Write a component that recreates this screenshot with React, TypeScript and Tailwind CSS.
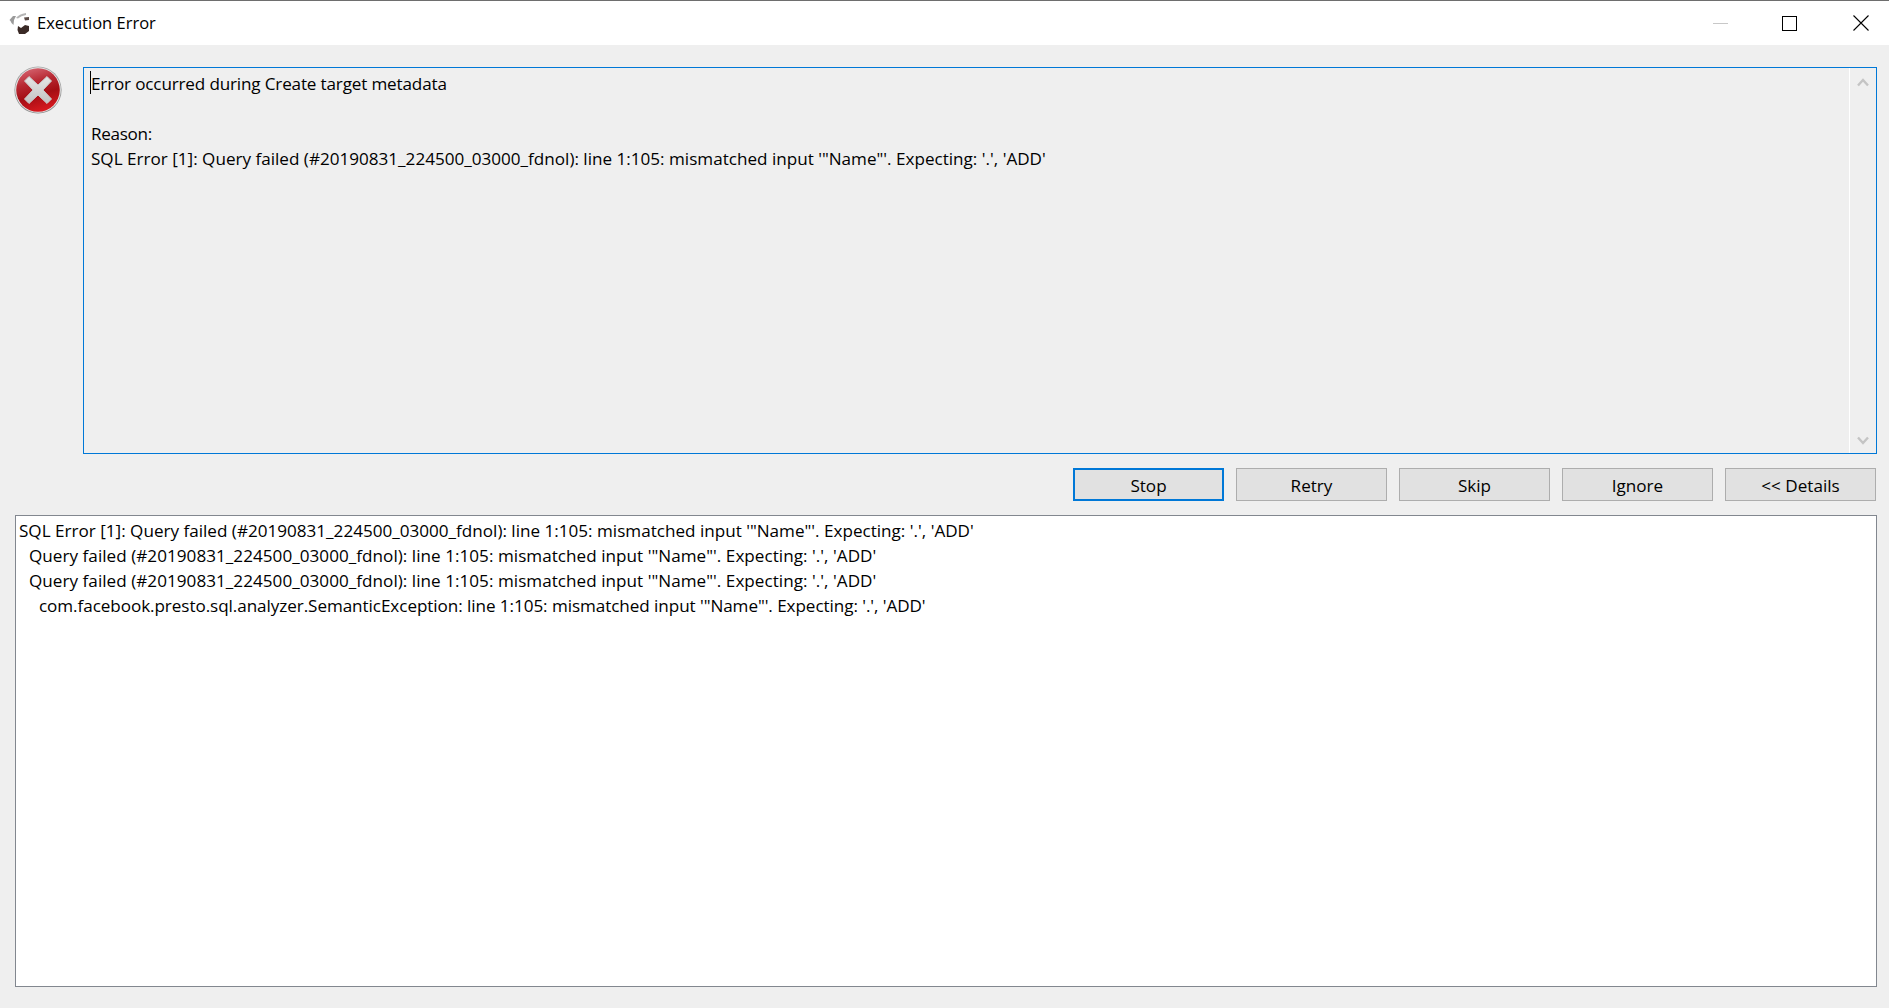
import React from 'react';

const font = "font-['Open_Sans','Noto_Sans',sans-serif]";

function AppIcon() {
  return (
    <svg width="22" height="22" viewBox="0 0 22 22">
      <path d="M0.5 8 L4 4 L7 4 L5 8 L4.5 13 L2.5 11 L1.5 9 Z" fill="#9a9a9a" />
      <path d="M7 6 Q10 2 17 1 L17 3 Q12 3.5 9 6.5 Z" fill="#b4b4b4" />
      <path d="M15 5.5 L20 5 L20 8 L16 8.5 Z" fill="#5a4a46" />
      <path d="M9 14 L12 16 L16 13 L20 14 L20 19 L16 22 L10 22 L8.5 18 Z" fill="#3a2a26" />
    </svg>
  );
}

function ErrorIcon() {
  return (
    <svg width="48" height="48" viewBox="0 0 48 48" className="-mt-px -ml-px">
      <defs>
        <linearGradient id="redFill" x1="0.35" y1="0" x2="0.65" y2="1">
          <stop offset="0" stopColor="#d4606c" />
          <stop offset="0.3" stopColor="#b82a34" />
          <stop offset="0.6" stopColor="#a40d14" />
          <stop offset="1" stopColor="#dc1a20" />
        </linearGradient>
        <linearGradient id="ringFill" x1="0" y1="0" x2="0" y2="1">
          <stop offset="0" stopColor="#a8a8a8" />
          <stop offset="1" stopColor="#8c8c8c" />
        </linearGradient>
        <linearGradient id="crossFill" x1="0" y1="0" x2="0" y2="1">
          <stop offset="0" stopColor="#e6e6e6" />
          <stop offset="1" stopColor="#c2c2c2" />
        </linearGradient>
      </defs>
      <circle cx="24" cy="24" r="23.6" fill="url(#ringFill)" />
      <circle cx="24" cy="24" r="22.8" fill="#e4e4e4" />
      <circle cx="24" cy="24" r="21.8" fill="url(#redFill)" />
      <path
        d="M15 10.5 L24 19 L33 10.5 L37.5 15 L29 24 L37.5 33 L33 37.5 L24 29 L15 37.5 L10.5 33 L19 24 L10.5 15 Z"
        fill="url(#crossFill)"
        stroke="#c9c9c9"
        strokeWidth="1"
        strokeLinejoin="round"
      />
    </svg>
  );
}

function Chevron({ down }: { down?: boolean }) {
  return (
    <svg width="12" height="9" viewBox="0 0 12 9">
      <path d={down ? 'M1 1.5 L6 7 L11 1.5' : 'M1 7.5 L6 2 L11 7.5'} fill="none" stroke="#c4c4c4" strokeWidth="2.4" />
    </svg>
  );
}

function DialogButton({ label, active }: { label: string; active?: boolean }) {
  return (
    <button
      className={
        active
          ? 'w-[151px] h-[33px] pt-[2px] bg-[#e1e1e1] border-2 border-[#0078d7] text-[17.1px] text-black leading-none'
          : 'w-[151px] h-[33px] pt-[2px] bg-[#e1e1e1] border border-[#adadad] text-[17.1px] text-black leading-none'
      }
    >
      {label}
    </button>
  );
}

export default function App() {
  return (
    <div className={`${font} w-full h-[1008px] overflow-hidden flex flex-col bg-[#efefef] text-[17.1px] text-black`}>
      {/* Title bar */}
      <div className="h-[45px] shrink-0 bg-white border-t border-[#6e6e6e] flex items-center pl-[9px]">
        <AppIcon />
        <span className="ml-[6px] text-[16.5px]">Execution Error</span>
        <div className="ml-auto flex items-center">
          <div className="w-[15px] h-px bg-[#c8c8c8] mr-[54px]" />
          <div className="w-[15px] h-[15px] border-[1.5px] border-black mr-[56px]" />
          <svg width="16" height="16" viewBox="0 0 16 16" className="mr-[20px]">
            <path d="M0.5 0.5 L15.5 15.5 M15.5 0.5 L0.5 15.5" stroke="#000" strokeWidth="1.1" />
          </svg>
        </div>
      </div>

      <div className="flex-1 flex flex-col pt-[22px] pl-[15px] pr-[12px] pb-[21px]">
        {/* Error message */}
        <div className="flex h-[387px] shrink-0">
          <div className="w-[68px] shrink-0">
            <ErrorIcon />
          </div>
          <div className="flex-1 flex border border-[#0078d7]">
            <div className="relative flex-1 pl-[7px] pt-[3px] leading-[25px]">
              <div className="absolute left-[6px] top-[3px] w-px h-[23px] bg-black" />
              <p className="tracking-[-0.16px]">Error occurred during Create target metadata</p>
              <p className="mt-[25px] tracking-[-0.3px]">Reason:</p>
              <p>SQL Error [1]: Query failed (#20190831_224500_03000_fdnol): line 1:105: mismatched input '"Name"'. Expecting: '.', 'ADD'</p>
            </div>
            <div className="w-[27px] shrink-0 border-l border-white flex flex-col items-center justify-between pt-[10px] pb-[8px]">
              <Chevron />
              <Chevron down />
            </div>
          </div>
        </div>

        {/* Buttons */}
        <div className="flex justify-end gap-[12px] mt-[14px] mr-px shrink-0">
          <DialogButton label="Stop" active />
          <DialogButton label="Retry" />
          <DialogButton label="Skip" />
          <DialogButton label="Ignore" />
          <DialogButton label="<< Details" />
        </div>

        {/* Details */}
        <div className="mt-[14px] flex-1 bg-white border border-[#82878f] pl-[3px] pt-[2px] leading-[25px]">
          <p>SQL Error [1]: Query failed (#20190831_224500_03000_fdnol): line 1:105: mismatched input '"Name"'. Expecting: '.', 'ADD'</p>
          <p className="pl-[10px] tracking-[0.035px]">Query failed (#20190831_224500_03000_fdnol): line 1:105: mismatched input '"Name"'. Expecting: '.', 'ADD'</p>
          <p className="pl-[10px] tracking-[0.035px]">Query failed (#20190831_224500_03000_fdnol): line 1:105: mismatched input '"Name"'. Expecting: '.', 'ADD'</p>
          <p className="pl-[20px] tracking-[-0.065px]">com.facebook.presto.sql.analyzer.SemanticException: line 1:105: mismatched input '"Name"'. Expecting: '.', 'ADD'</p>
        </div>
      </div>
    </div>
  );
}
